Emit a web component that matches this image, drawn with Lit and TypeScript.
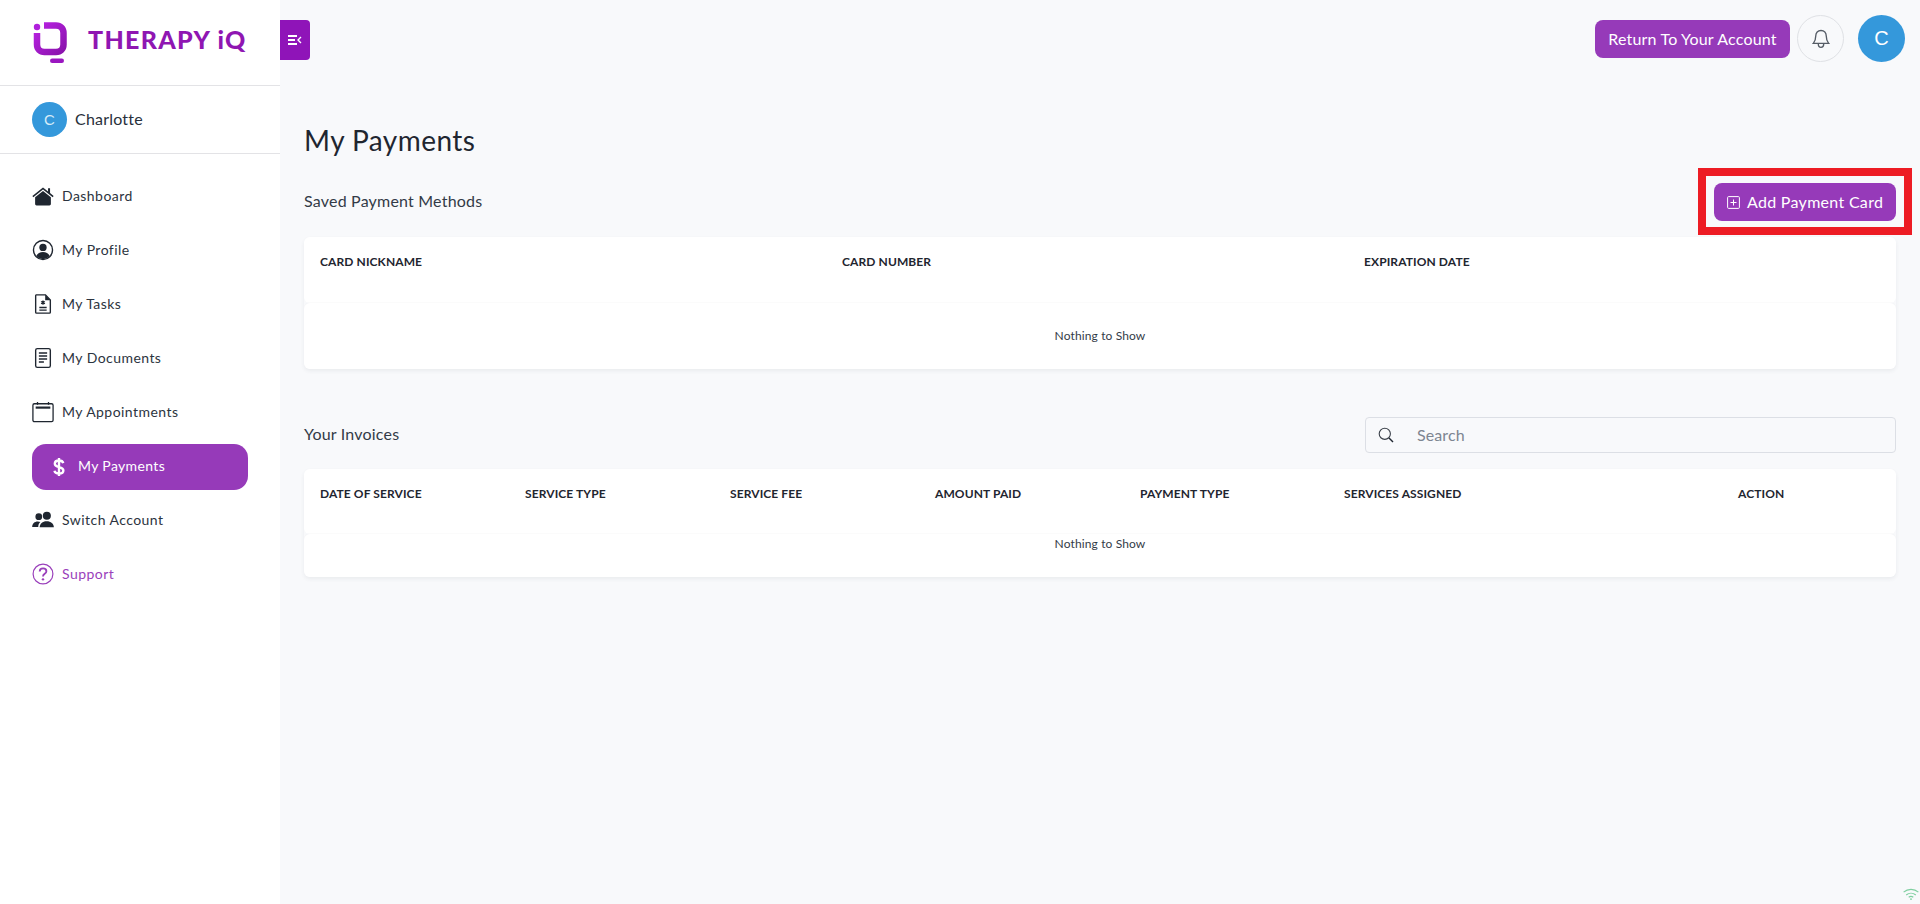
import { LitElement, html, css, svg } from "lit";
import { customElement } from "lit/decorators.js";

const icons: Record<string, any> = {
  home: svg`<svg viewBox="0 0 24 24" width="24" height="24"><path fill="#1f2630" d="M12 2.6 17.500 7V3.600h2.200v5.200L23.600 12l-1 1.300L12 4.900 1.400 13.300l-1-1.300zM3.400 13.400 12 6.600l8.600 6.800v7.400c0 .9-.7 1.600-1.600 1.600H5c-.9 0-1.600-.7-1.600-1.600z"/></svg>`,
  profile: svg`<svg viewBox="0 0 24 24" width="24" height="24"><circle cx="12" cy="12" r="10.400" fill="none" stroke="#1f2630" stroke-width="1.500"/><circle cx="12" cy="9.200" r="4" fill="#1f2630"/><path fill="#1f2630" d="M4.600 18.600c1.400-3 4.200-4.300 7.400-4.300s6 1.300 7.400 4.300A10 10 0 0 1 12 22a10 10 0 0 1-7.400-3.400z"/></svg>`,
  tasks: svg`<svg viewBox="0 0 24 24" width="24" height="24"><path fill="none" stroke="#1f2630" stroke-width="1.500" d="M4.500 2h10.200L20 7.600V21c0 .6-.4 1-1 1H5c-.6 0-1-.4-1-1V3c0-.6.2-1 .5-1z"/><path fill="#1f2630" d="M14.400 2 20 8h-5.600z"/><path stroke="#1f2630" stroke-width="1.400" d="M8 15.800h8M8 18.600h8M12 8.200v4.600M9.900 9.300l4.200 2.400M14.100 9.300l-4.200 2.400"/></svg>`,
  docs: svg`<svg viewBox="0 0 24 24" width="24" height="24"><rect x="4" y="1.800" width="16" height="20.400" rx="1.800" fill="none" stroke="#1f2630" stroke-width="1.500"/><path stroke="#1f2630" stroke-width="1.500" d="M7.500 6.500h9M7.500 9.800h9M7.500 13.100h9M7.500 16.400h5.500"/></svg>`,
  cal: svg`<svg viewBox="0 0 24 24" width="24" height="24"><rect x="1" y="3" width="22" height="19.500" rx="1.600" fill="none" stroke="#1f2630" stroke-width="1.400"/><path stroke="#1f2630" stroke-width="1.400" d="M6 1v3M18 1v3"/><path stroke="#1f2630" stroke-width="2.400" d="M4 7.200h16"/></svg>`,
  users: svg`<svg viewBox="0 0 24 24" width="24" height="24"><circle cx="7.400" cy="8.400" r="3.700" fill="#1f2630"/><circle cx="16.200" cy="7.400" r="4.400" fill="#1f2630"/><path fill="#1f2630" d="M.2 19.600c0-3.600 2.600-6 6-6 1.200 0 2.100.2 2.900.7-1.400 1.300-2.300 3.100-2.300 5.300H.2z"/><path fill="#1f2630" d="M8.400 19.800c0-3.600 3-6.500 7.600-6.500s7.800 2.900 7.800 6.500z"/></svg>`,
  help: svg`<svg viewBox="0 0 24 24" width="24" height="24"><circle cx="12" cy="12" r="10.800" fill="none" stroke="#9a3fbb" stroke-width="1.300"/><path fill="none" stroke="#9a3fbb" stroke-width="2" d="M8.400 9.400c0-2.200 1.600-3.500 3.700-3.500s3.600 1.200 3.600 3.100c0 2.900-3.700 2.700-3.700 5.600"/><circle cx="12" cy="17.800" r="1.300" fill="#9a3fbb"/></svg>`,
  dollar: svg`<svg viewBox="0 0 14 24" width="14" height="24"><path fill="none" stroke="#fff" stroke-width="2.800" d="M12 7.400C11.400 5.400 9.500 4.500 7 4.500 4.200 4.500 2.100 5.900 2.100 8.100c0 5.200 10 2.700 10 7.900 0 2.300-2.200 3.600-5.100 3.600-2.700 0-4.800-1.100-5.300-3.300M7 1.400v21.200"/></svg>`,
};

const nav = [
  { label: "Dashboard", icon: "home" },
  { label: "My Profile", icon: "profile" },
  { label: "My Tasks", icon: "tasks" },
  { label: "My Documents", icon: "docs" },
  { label: "My Appointments", icon: "cal" },
  { label: "My Payments", icon: "dollar", active: true },
  { label: "Switch Account", icon: "users" },
  { label: "Support", icon: "help", support: true },
];

@customElement("app-root")
export class AppRoot extends LitElement {
  static styles = css`
    :host {
      display: block;
      height: 904px;
      overflow: hidden;
      background: #f8f9fb;
      color: #1f2630;
      font-family: "Lato", "Noto Sans", sans-serif;
    }
    .page { display: flex; height: 904px; }
    .side { width: 280px; flex: none; background: #fff; }
    .brand { display: flex; align-items: flex-start; padding: 22px 0 0 33px; gap: 21px; border-bottom: 1px solid #e3e3e6; box-sizing: border-box; height: 86px; }
    .brand-name { font-weight: 900; font-size: 25px; line-height: 27px; letter-spacing: 1.3px; color: #8f16b2; margin-top: 4px; white-space: nowrap; }
    .who { height: 68px; box-sizing: border-box; display: flex; align-items: center; padding-left: 32px; gap: 8px; border-bottom: 1px solid #e3e3e6; font-size: 16px; letter-spacing: 0.2px; color: #28303b; }
    .who span { margin-bottom: 3px; }
    .ava { border-radius: 50%; background: #3498db; color: #fff; display: flex; align-items: center; justify-content: center; font-family: "Liberation Sans", sans-serif; flex: none; }
    .ava.s { width: 35px; height: 35px; font-size: 15px; color: #d6ebf8; }
    .ava.l { width: 47px; height: 47px; font-size: 20px; }
    .nav { display: flex; flex-direction: column; padding: 19px 32px 0; }
    .item { height: 46px; margin-bottom: 8px; display: flex; align-items: center; gap: 8px; font-size: 14px; letter-spacing: 0.45px; color: #2c3440; }
    .item span { margin-bottom: 2px; }
    .item svg { flex: none; width: 22px; height: 22px; }
    .item.active { background: #963ab9; color: #fff; border-radius: 14px; padding-left: 21px; gap: 13px; letter-spacing: 0.35px; margin-top: 1px; margin-bottom: 7px; }
    .item.active span { margin-bottom: 4px; }
    .item.active svg { width: 12px; height: 24px; }
    .item.support { color: #9a3fbb; }
    .main { flex: 1; min-width: 0; display: flex; flex-direction: column; }
    .top { display: flex; align-items: flex-start; height: 77px; padding-right: 15px; }
    .toggle { width: 30px; height: 40px; margin-top: 20px; background: #8f14b8; border-radius: 0 4px 4px 0; display: flex; align-items: center; justify-content: center; }
    .top-right { margin-left: auto; display: flex; align-items: center; margin-top: 15px; }
    .btn { background: #963ab9; color: #fff; border-radius: 8px; height: 38px; display: flex; align-items: center; font-size: 16px; letter-spacing: 0.18px; white-space: nowrap; }
    .btn span { margin-bottom: 1px; }
    .return { width: 195px; justify-content: center; margin-right: 7px; }
    .bell { width: 47px; height: 47px; border: 1px solid #dfe1e5; border-radius: 50%; box-sizing: border-box; display: flex; align-items: center; justify-content: center; margin-right: 14px; }
    .content { padding: 0 24px; display: flex; flex-direction: column; }
    h1 { margin: 42px 0 0; font-weight: 400; font-size: 28px; line-height: 42px; letter-spacing: 0.45px; color: #1f2630; }
    .row { display: flex; align-items: center; justify-content: space-between; font-size: 16px; letter-spacing: 0.2px; color: #333b47; }
    .row > span { margin-bottom: 3px; }
    .row.one { height: 38px; margin-top: 22px; margin-bottom: 16px; }
    .row.two { height: 36px; margin-top: 48px; margin-bottom: 16px; }
    .add { position: relative; width: 182px; gap: 7px; padding-left: 13px; box-sizing: border-box; letter-spacing: 0.3px; }
    .add span { margin-bottom: 2px; }
    .mark { position: absolute; left: -16px; right: -16px; top: -15px; bottom: -14px; border: 8px solid #ed1c24; pointer-events: none; }
    .card { display: flex; flex-direction: column; border-radius: 6px; box-shadow: 0 2px 4px rgba(40, 50, 70, 0.07); }
    .head, .empty { background: #fff; border-radius: 6px; }
    .head { display: grid; align-items: center; padding: 0 0 17px 16px; box-sizing: border-box; font-size: 12px; font-weight: 700; letter-spacing: 0.1px; color: #1f2630; }
    .head.three { grid-template-columns: 522px 522px 1fr; height: 66px; }
    .head.seven { grid-template-columns: 205px 205px 205px 205px 204px 394px 1fr; height: 65px; }
    .empty { display: flex; align-items: center; justify-content: center; font-size: 12px; letter-spacing: 0.12px; color: #333b47; box-shadow: 0 -1px 1px rgba(40, 50, 70, 0.02); }
    .empty.a { height: 66px; padding-bottom: 1px; box-sizing: border-box; }
    .empty.b { height: 43px; padding-bottom: 24px; box-sizing: border-box; }
    .search { width: 531px; height: 36px; box-sizing: border-box; border: 1px solid #dcdfe5; border-radius: 4px; display: flex; align-items: center; padding-left: 12px; gap: 23px; font-size: 16px; letter-spacing: 0.1px; color: #7d8591; background: #f8f9fb; }
    .search span { margin-bottom: 2px; }
    .wifi { position: absolute; right: 0; bottom: 4px; }
  `;

  render() {
    return html`<div class="page">
      <aside class="side">
        <div class="brand">
          <svg width="34" height="41" viewBox="0 0 34 41">
            <defs><linearGradient id="g" x1="0" y1="0" x2="1" y2="1"><stop offset="0" stop-color="#b822e2"/><stop offset="1" stop-color="#8a13ac"/></linearGradient></defs>
            <circle cx="4" cy="5" r="3.200" fill="#b01fdc"/>
            <path fill="none" stroke="url(#g)" stroke-width="6.500" d="M11 3.500h12c4.500 0 7.500 3 7.500 7.500v11.500c0 4.500-3 7.500-7.500 7.500H11.500c-4.500 0-7.500-3-7.500-7.500V11"/>
            <rect x="17" y="36.500" width="14" height="4.500" rx="2.200" fill="#9a17c0"/>
          </svg>
          <span class="brand-name">THERAPY iQ</span>
        </div>
        <div class="who"><div class="ava s">C</div><span>Charlotte</span></div>
        <nav class="nav">
          ${nav.map(
            (n) => html`<div class="item ${n.active ? "active" : ""} ${n.support ? "support" : ""}">${icons[n.icon]}<span>${n.label}</span></div>`
          )}
        </nav>
      </aside>
      <main class="main">
        <div class="top">
          <div class="toggle">
            <svg width="14" height="12" viewBox="0 0 14 12"><path stroke="#fff" stroke-width="2" d="M0 2h9M0 6h7M0 10h9"/><path fill="none" stroke="#fff" stroke-width="1.400" d="M13 3 10 6l3 3"/></svg>
          </div>
          <div class="top-right">
            <div class="btn return"><span>Return To Your Account</span></div>
            <div class="bell">
              <svg width="18" height="20" viewBox="0 0 20 22"><path fill="none" stroke="#555c66" stroke-width="1.500" d="M10 1.500c-3.600 0-5.800 2.700-5.800 6 0 4.300-1 6.300-2.700 8.300h17c-1.700-2-2.700-4-2.700-8.300 0-3.300-2.200-6-5.800-6zM7 16.500c0 2.500 1.300 3.800 3 3.800s3-1.300 3-3.800"/></svg>
            </div>
            <div class="ava l">C</div>
          </div>
        </div>
        <div class="content">
          <h1>My Payments</h1>
          <div class="row one">
            <span>Saved Payment Methods</span>
            <div class="btn add">
              <svg width="13" height="13" viewBox="0 0 13 13"><rect x=".6" y=".6" width="11.800" height="11.800" rx="1" fill="none" stroke="#fff" stroke-width="1"/><path stroke="#fff" stroke-width="1" d="M6.500 3.500v6M3.500 6.500h6"/></svg>
              <span>Add Payment Card</span>
              <div class="mark"></div>
            </div>
          </div>
          <section class="card">
            <div class="head three"><span>CARD NICKNAME</span><span>CARD NUMBER</span><span>EXPIRATION DATE</span></div>
            <div class="empty a">Nothing to Show</div>
          </section>
          <div class="row two">
            <span>Your Invoices</span>
            <div class="search">
              <svg width="16" height="16" viewBox="0 0 16 16"><circle cx="6.800" cy="6.800" r="5.600" fill="none" stroke="#3a4049" stroke-width="1.100"/><path stroke="#1f2630" stroke-width="1.400" d="m11 11 4 4"/></svg>
              <span>Search</span>
            </div>
          </div>
          <section class="card">
            <div class="head seven"><span>DATE OF SERVICE</span><span>SERVICE TYPE</span><span>SERVICE FEE</span><span>AMOUNT PAID</span><span>PAYMENT TYPE</span><span>SERVICES ASSIGNED</span><span>ACTION</span></div>
            <div class="empty b">Nothing to Show</div>
          </section>
        </div>
      </main>
      <svg class="wifi" width="18" height="12" viewBox="0 0 18 13"><g fill="none" stroke="#7fcfa0" stroke-width="1.300"><path d="M1 4.500C5.500.6 12.500.6 17 4.500"/><path d="M3.800 7.500c3-2.400 7.400-2.400 10.400 0"/><path d="M6.500 10c1.500-1.100 3.500-1.100 5 0"/></g><circle cx="9" cy="12" r="1" fill="#7fcfa0"/></svg>
    </div>`;
  }
}
